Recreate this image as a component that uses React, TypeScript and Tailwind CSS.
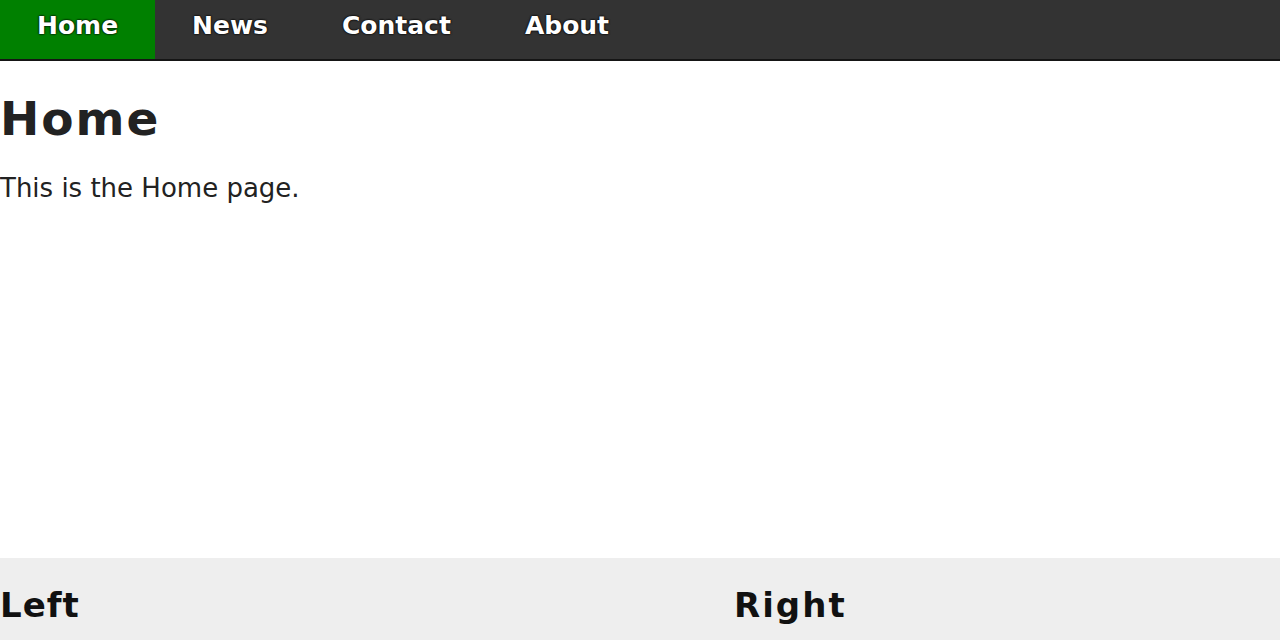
import React from "react";

const tabs = ["Home", "News", "Contact", "About"];

export default function App() {
  return (
    <div className="w-full bg-white text-[#222]" style={{ fontFamily: '"DejaVu Sans", "Liberation Sans", sans-serif' }}>
      <nav className="flex h-[61px] bg-[#333] border-b-2 border-[#151515]">
        {tabs.map((t, i) => (
          <a
            key={t}
            href="#"
            className={
              "h-[59px] px-[37px] pt-[13px] text-[25px] leading-[25px] font-bold text-white [text-shadow:0_0_2px_#000,0_0_2px_#000] " +
              (i === 0 ? "bg-[#008000]" : "")
            }
          >
            {t}
          </a>
        ))}
      </nav>
      <main className="h-[497px] pt-[35px]">
        <h1 className="text-[47px] leading-[46px] font-bold tracking-[2px] text-[#222]">Home</h1>
        <p className="mt-[33px] text-[26px] leading-[26px] text-[#222]">This is the Home page.</p>
      </main>
      <footer className="flex bg-[#eee] pt-[30px] pb-[40px]">
        <div className="w-[734px]">
          <h2 className="text-[34px] leading-[34px] font-bold tracking-[1px] text-[#111]">Left</h2>
        </div>
        <div className="flex-1">
          <h2 className="text-[34px] leading-[34px] font-bold tracking-[2px] text-[#111]">Right</h2>
        </div>
      </footer>
    </div>
  );
}
